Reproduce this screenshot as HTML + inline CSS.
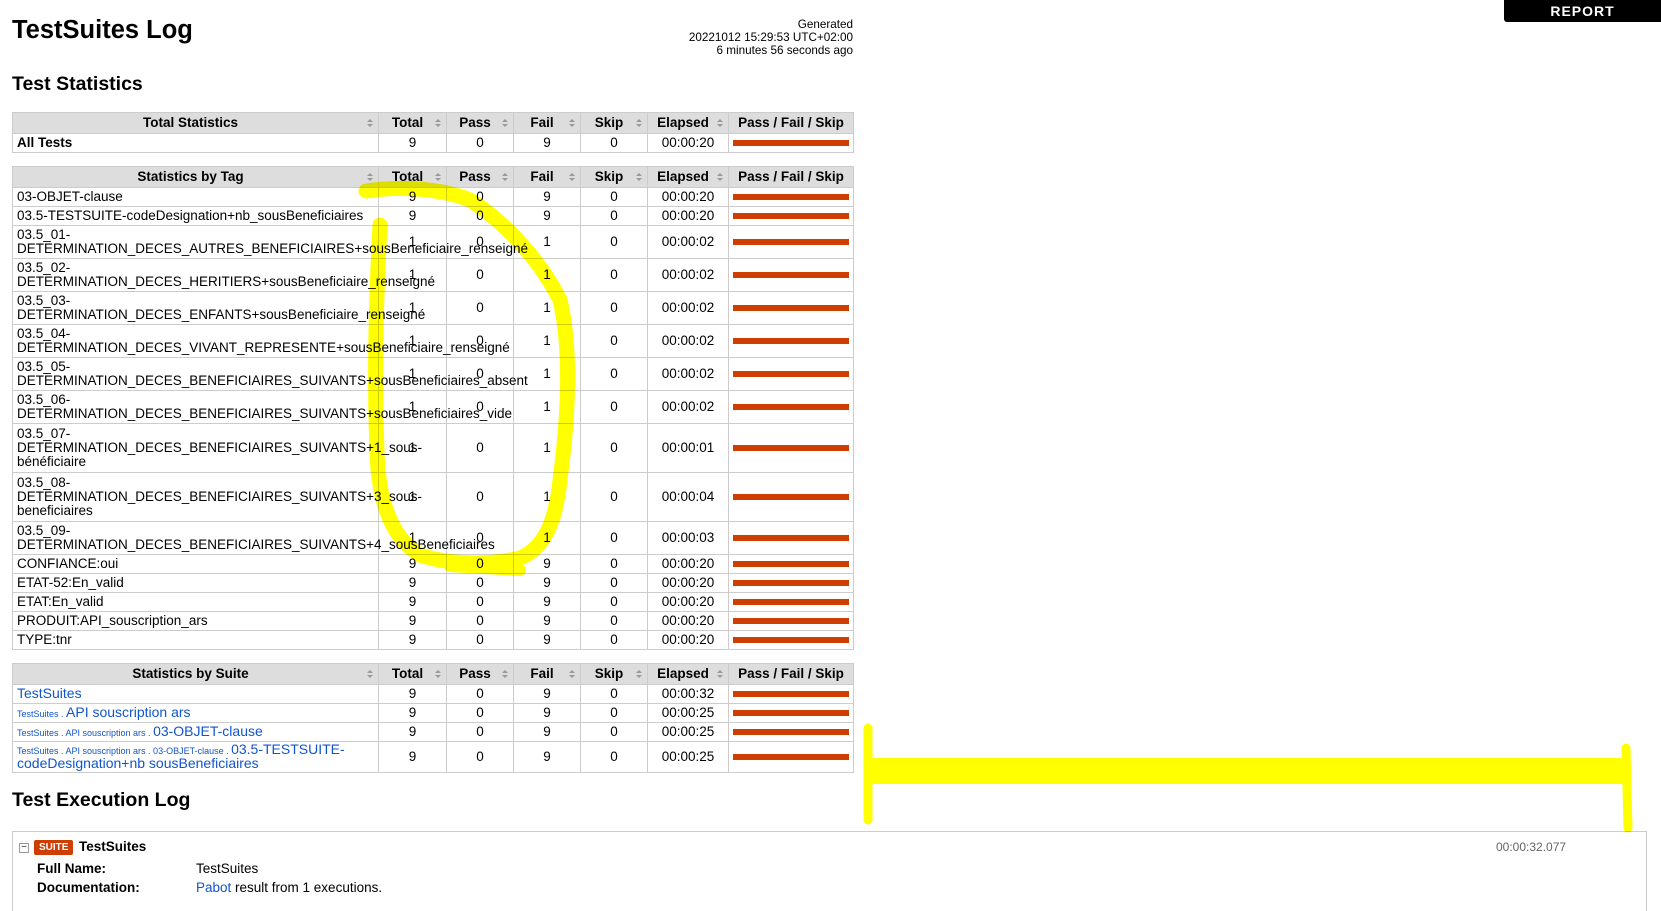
<!DOCTYPE html>
<html><head><meta charset="utf-8">
<style>
*{box-sizing:border-box}
body{margin:0;width:1661px;height:894px;overflow:hidden;background:#fff;font-family:"Liberation Sans",Arial,sans-serif;font-size:13px;color:#000;position:relative}
h1{position:absolute;left:12px;top:16px;margin:0;font-size:25.5px;font-weight:bold}
.gen{position:absolute;right:808px;top:18px;text-align:right;font-size:11.7px;line-height:13px}
.report{position:absolute;left:1504px;top:0;width:157px;height:22px;background:#000;color:#fff;font-weight:bold;font-size:14px;letter-spacing:1px;text-align:center;line-height:22px;border-bottom-left-radius:3px}
h2{position:absolute;left:12px;margin:0;font-size:19.5px;font-weight:bold}
table{position:absolute;left:12px;width:841px;border-collapse:collapse;table-layout:fixed;font-size:13.5px}
td,th{border:1px solid #ccc;padding:2px 4px;line-height:14px;white-space:nowrap;overflow:visible}
tr.t3 td{padding:3px 4px}
th{background:#ddd;font-weight:bold;text-align:center;position:relative;height:21px;padding:2px 14px 2px 4px}
th:not(:last-child):after{content:"";position:absolute;right:5px;top:6px;width:0;height:0;border:3px solid transparent;border-bottom:3px solid #999;border-top:none}
th:not(:last-child):before{content:"";position:absolute;right:5px;top:11px;width:0;height:0;border:3px solid transparent;border-top:3px solid #999;border-bottom:none}
td{text-align:center}
td.n{text-align:left}
td.g{padding:0 4px}
.bar{height:6px;background:#ce3e01;width:100%}
a{color:#1155cc;text-decoration:none}
.s{font-size:9px;line-height:9px}
.big{font-size:14px;line-height:13px}
.st td{padding-top:1px;padding-bottom:1px;height:19px}
.suite{position:absolute;left:12px;top:831px;width:1635px;height:80px;border:1px solid #ccc;border-bottom:none}
.tog{position:absolute;left:6px;top:11px;width:10px;height:10px;border:1px solid #999;font-size:10px;line-height:7px;text-align:center;color:#333}
.lab{position:absolute;left:21px;top:8px;background:#ce3e01;color:#fff;font-weight:bold;font-size:10px;padding:1px 5px;border-radius:2px;line-height:13px}
.sn{position:absolute;left:66px;top:7px;font-weight:bold;font-size:13.5px}
.el{position:absolute;left:1483px;top:8px;color:#666;font-size:12px}
.k{position:absolute;left:24px;font-weight:bold;font-size:13.5px}
.v{position:absolute;left:183px;font-size:13.5px}
svg.hl{position:absolute;left:0;top:0;mix-blend-mode:multiply;pointer-events:none}
</style></head><body>
<h1>TestSuites Log</h1>
<div class="gen">Generated<br>20221012 15:29:53 UTC+02:00<br>6 minutes 56 seconds ago</div>
<div class="report">REPORT</div>
<h2 style="top:73px">Test Statistics</h2>

<table style="top:112px">
<colgroup><col style="width:366px"><col style="width:68px"><col style="width:67px"><col style="width:67px"><col style="width:67px"><col style="width:81px"><col style="width:125px"></colgroup>
<tr><th>Total Statistics</th><th>Total</th><th>Pass</th><th>Fail</th><th>Skip</th><th>Elapsed</th><th style="padding-right:4px">Pass / Fail / Skip</th></tr>
<tr><td class="n"><b>All Tests</b></td><td>9</td><td>0</td><td>9</td><td>0</td><td>00:00:20</td><td class="g"><div class="bar"></div></td></tr>
</table>

<table style="top:166px">
<colgroup><col style="width:366px"><col style="width:68px"><col style="width:67px"><col style="width:67px"><col style="width:67px"><col style="width:81px"><col style="width:125px"></colgroup>
<tr><th>Statistics by Tag</th><th>Total</th><th>Pass</th><th>Fail</th><th>Skip</th><th>Elapsed</th><th style="padding-right:4px">Pass / Fail / Skip</th></tr>
<tr><td class="n">03-OBJET-clause</td><td>9</td><td>0</td><td>9</td><td>0</td><td>00:00:20</td><td class="g"><div class="bar"></div></td></tr>
<tr><td class="n">03.5-TESTSUITE-codeDesignation+nb_sousBeneficiaires</td><td>9</td><td>0</td><td>9</td><td>0</td><td>00:00:20</td><td class="g"><div class="bar"></div></td></tr>
<tr><td class="n">03.5_01-<br>DETERMINATION_DECES_AUTRES_BENEFICIAIRES+sousBeneficiaire_renseigné</td><td>1</td><td>0</td><td>1</td><td>0</td><td>00:00:02</td><td class="g"><div class="bar"></div></td></tr>
<tr><td class="n">03.5_02-<br>DETERMINATION_DECES_HERITIERS+sousBeneficiaire_renseigné</td><td>1</td><td>0</td><td>1</td><td>0</td><td>00:00:02</td><td class="g"><div class="bar"></div></td></tr>
<tr><td class="n">03.5_03-<br>DETERMINATION_DECES_ENFANTS+sousBeneficiaire_renseigné</td><td>1</td><td>0</td><td>1</td><td>0</td><td>00:00:02</td><td class="g"><div class="bar"></div></td></tr>
<tr><td class="n">03.5_04-<br>DETERMINATION_DECES_VIVANT_REPRESENTE+sousBeneficiaire_renseigné</td><td>1</td><td>0</td><td>1</td><td>0</td><td>00:00:02</td><td class="g"><div class="bar"></div></td></tr>
<tr><td class="n">03.5_05-<br>DETERMINATION_DECES_BENEFICIAIRES_SUIVANTS+sousBeneficiaires_absent</td><td>1</td><td>0</td><td>1</td><td>0</td><td>00:00:02</td><td class="g"><div class="bar"></div></td></tr>
<tr><td class="n">03.5_06-<br>DETERMINATION_DECES_BENEFICIAIRES_SUIVANTS+sousBeneficiaires_vide</td><td>1</td><td>0</td><td>1</td><td>0</td><td>00:00:02</td><td class="g"><div class="bar"></div></td></tr>
<tr class="t3"><td class="n">03.5_07-<br>DETERMINATION_DECES_BENEFICIAIRES_SUIVANTS+1_sous-<br>bénéficiaire</td><td>1</td><td>0</td><td>1</td><td>0</td><td>00:00:01</td><td class="g"><div class="bar"></div></td></tr>
<tr class="t3"><td class="n">03.5_08-<br>DETERMINATION_DECES_BENEFICIAIRES_SUIVANTS+3_sous-<br>beneficiaires</td><td>1</td><td>0</td><td>1</td><td>0</td><td>00:00:04</td><td class="g"><div class="bar"></div></td></tr>
<tr><td class="n">03.5_09-<br>DETERMINATION_DECES_BENEFICIAIRES_SUIVANTS+4_sousBeneficiaires</td><td>1</td><td>0</td><td>1</td><td>0</td><td>00:00:03</td><td class="g"><div class="bar"></div></td></tr>
<tr><td class="n">CONFIANCE:oui</td><td>9</td><td>0</td><td>9</td><td>0</td><td>00:00:20</td><td class="g"><div class="bar"></div></td></tr>
<tr><td class="n">ETAT-52:En_valid</td><td>9</td><td>0</td><td>9</td><td>0</td><td>00:00:20</td><td class="g"><div class="bar"></div></td></tr>
<tr><td class="n">ETAT:En_valid</td><td>9</td><td>0</td><td>9</td><td>0</td><td>00:00:20</td><td class="g"><div class="bar"></div></td></tr>
<tr><td class="n">PRODUIT:API_souscription_ars</td><td>9</td><td>0</td><td>9</td><td>0</td><td>00:00:20</td><td class="g"><div class="bar"></div></td></tr>
<tr><td class="n">TYPE:tnr</td><td>9</td><td>0</td><td>9</td><td>0</td><td>00:00:20</td><td class="g"><div class="bar"></div></td></tr>
</table>

<table style="top:663px" class="st">
<colgroup><col style="width:366px"><col style="width:68px"><col style="width:67px"><col style="width:67px"><col style="width:67px"><col style="width:81px"><col style="width:125px"></colgroup>
<tr><th>Statistics by Suite</th><th>Total</th><th>Pass</th><th>Fail</th><th>Skip</th><th>Elapsed</th><th style="padding-right:4px">Pass / Fail / Skip</th></tr>
<tr><td class="n"><a class="big">TestSuites</a></td><td>9</td><td>0</td><td>9</td><td>0</td><td>00:00:32</td><td class="g"><div class="bar"></div></td></tr>
<tr><td class="n"><a><span class="s">TestSuites . </span><span class="big">API souscription ars</span></a></td><td>9</td><td>0</td><td>9</td><td>0</td><td>00:00:25</td><td class="g"><div class="bar"></div></td></tr>
<tr><td class="n"><a><span class="s">TestSuites . API souscription ars . </span><span class="big">03-OBJET-clause</span></a></td><td>9</td><td>0</td><td>9</td><td>0</td><td>00:00:25</td><td class="g"><div class="bar"></div></td></tr>
<tr><td class="n"><a><span class="s">TestSuites . API souscription ars . 03-OBJET-clause . </span><span class="big">03.5-TESTSUITE-<br>codeDesignation+nb sousBeneficiaires</span></a></td><td>9</td><td>0</td><td>9</td><td>0</td><td>00:00:25</td><td class="g"><div class="bar"></div></td></tr>
</table>

<h2 style="top:789px">Test Execution Log</h2>
<div class="suite">
<div class="tog">−</div>
<div class="lab">SUITE</div>
<div class="sn">TestSuites</div>
<div class="el">00:00:32.077</div>
<div class="k" style="top:29px">Full Name:</div><div class="v" style="top:29px">TestSuites</div>
<div class="k" style="top:48px">Documentation:</div><div class="v" style="top:48px"><a>Pabot</a> result from 1 executions.</div>
</div>

<svg class="hl" width="1661" height="894" viewBox="0 0 1661 894">
<g fill="none" stroke="#ffff00" stroke-linecap="round" stroke-linejoin="round">
<path d="M366 191 C400 186 440 188 470 200 C505 222 540 260 560 300 C572 350 568 420 560 480 C556 520 545 548 520 558 C490 565 450 565 420 555 C395 540 382 510 378 470 C374 400 375 320 380 225" stroke-width="15"/>
<path d="M450 566 L520 570" stroke-width="12"/>
<path d="M868 728 L868 820" stroke-width="9"/>
<path d="M868 771 L1626 771" stroke-width="26" stroke-linecap="butt"/>
<path d="M1626 748 L1628 828" stroke-width="9"/>
</g>
</svg>
</body></html>
